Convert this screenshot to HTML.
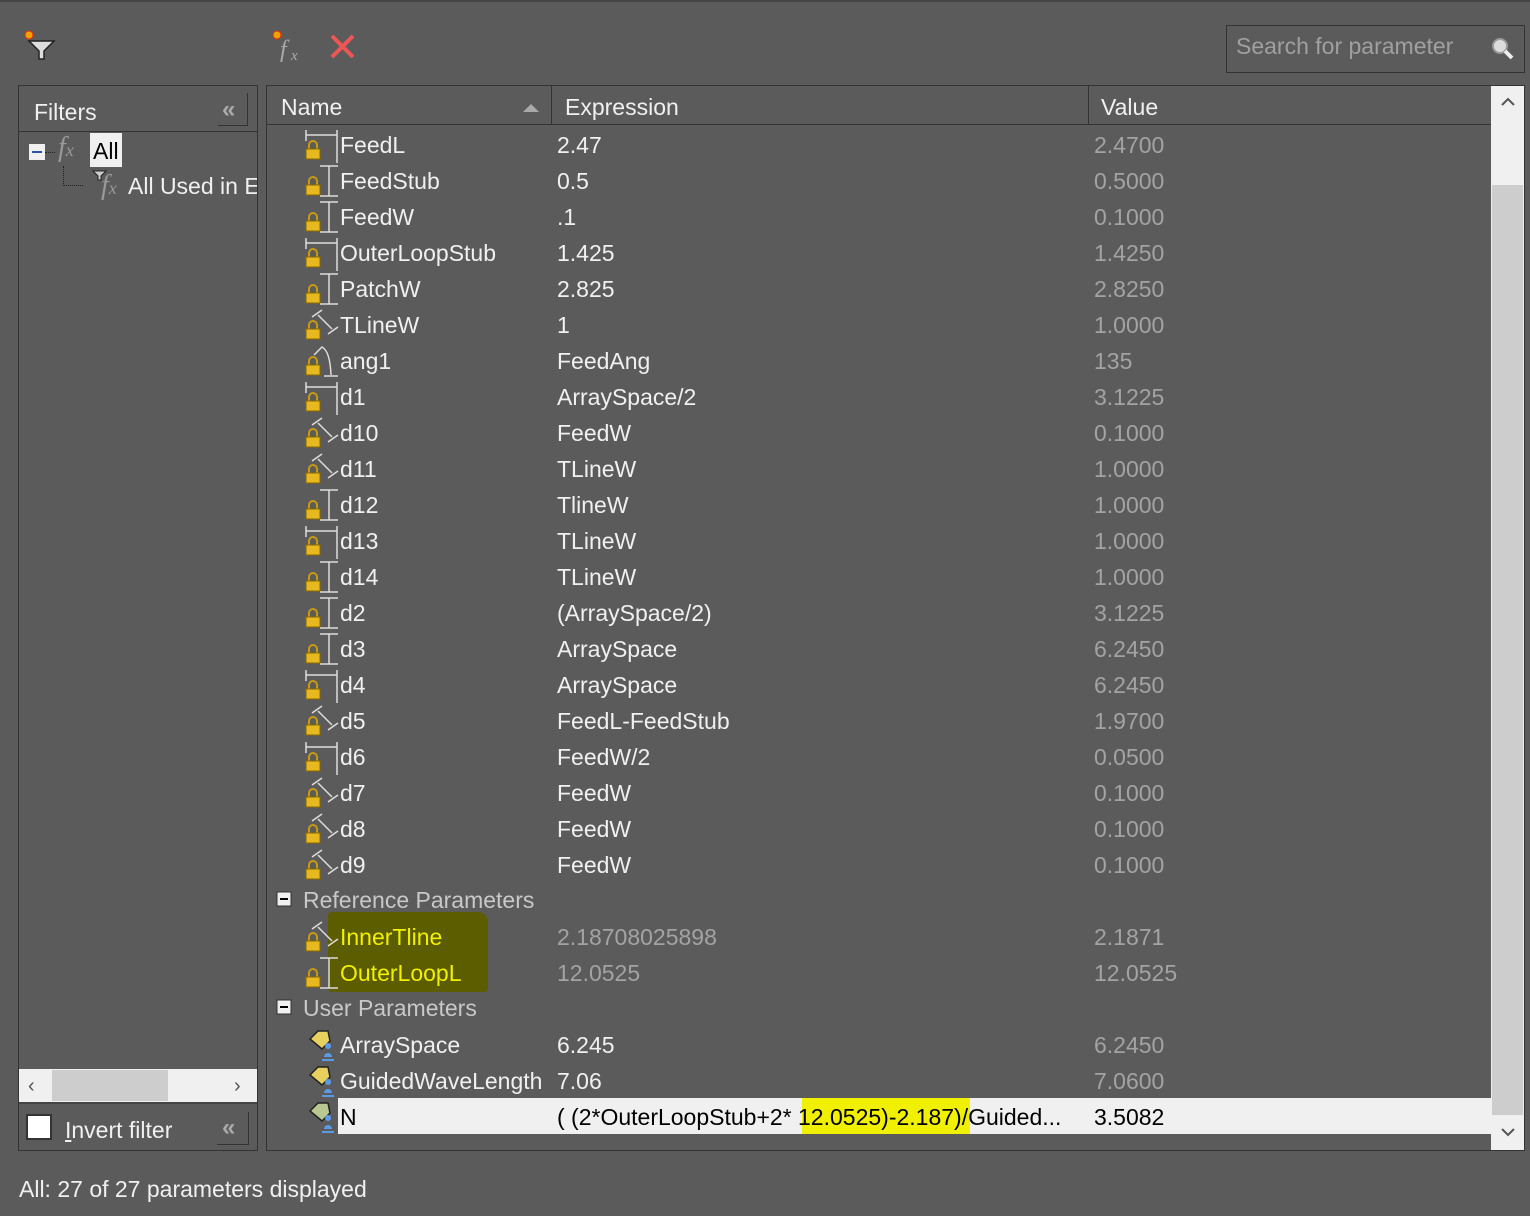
<!DOCTYPE html>
<html><head><meta charset="utf-8">
<style>
*{margin:0;padding:0;box-sizing:border-box}
body{width:1530px;height:1216px;background:#5b5b5b;font-family:"Liberation Sans",sans-serif;color:#f0f0f0;position:relative;overflow:hidden}
.a{position:absolute}
.t{position:absolute;font-size:23px;line-height:36px;white-space:nowrap}
.g{color:#a3a3a3}
</style></head><body>
<div class="a" style="left:0;top:0;width:1530px;height:2px;background:#444"></div>
<!-- toolbar icons -->
<svg class="a" style="left:24px;top:30px" width="36" height="32"><circle cx="5" cy="5" r="4" fill="#f5a000" stroke="#e03000"/><path d="M5 11 H30 L20 21 V29 H15 V21 Z" fill="#ddd" stroke="#222" stroke-width="1.5"/></svg>
<svg class="a" style="left:272px;top:30px" width="36" height="34"><circle cx="5" cy="5" r="4" fill="#f5a000" stroke="#e03000"/><text x="8" y="27" font-family="Liberation Serif" font-style="italic" font-size="24" fill="#aaa">f</text><text x="19" y="30" font-family="Liberation Serif" font-style="italic" font-size="15" fill="#aaa">x</text></svg>
<svg class="a" style="left:328px;top:32px" width="30" height="28"><path d="M4 4 L25 25 M25 4 L4 25" stroke="#e55" stroke-width="4"/></svg>
<!-- search -->
<div class="a" style="left:1226px;top:25px;width:299px;height:48px;border:1px solid #333"></div>
<div class="t" style="left:1236px;top:28px;color:#a0a0a0">Search for parameter</div>
<svg class="a" style="left:1490px;top:36px" width="26" height="26"><circle cx="10" cy="10" r="7" fill="#ddd" stroke="#999" stroke-width="2"/><path d="M15 15 L22 22" stroke="#eee" stroke-width="4"/></svg>
<!-- left panel -->
<div class="a" style="left:18px;top:85px;width:240px;height:1066px;border:1px solid #333"></div>
<div class="a" style="left:19px;top:131px;width:238px;height:1px;background:#333"></div>
<div class="t" style="left:34px;top:94px">Filters</div>
<div class="a" style="left:218px;top:93px;width:30px;height:33px;border-right:1px solid #333;border-bottom:1px solid #333"></div>
<div class="t" style="left:222px;top:92px;color:#aaa;font-weight:bold;font-size:24px">«</div>
<div class="a" style="left:29px;top:144px;width:16px;height:16px;background:#f0f0f0"></div>
<div class="a" style="left:32px;top:151px;width:10px;height:2px;background:#3050a0"></div>
<div class="a" style="left:45px;top:152px;width:10px;border-top:1px dotted #222"></div>
<div class="a" style="left:63px;top:166px;height:20px;border-left:1px dotted #222"></div>
<div class="a" style="left:63px;top:185px;width:20px;border-top:1px dotted #222"></div>
<div class="t" style="left:58px;top:130px;font-family:'Liberation Serif';font-style:italic;color:#999;font-size:28px">f<span style="font-size:18px">x</span></div>
<div class="a" style="left:90px;top:133px;width:32px;height:34px;background:#f0f0f0"></div>
<div class="t" style="left:93px;top:133px;color:#000">All</div>
<svg class="a" style="left:92px;top:170px" width="16" height="12"><path d="M1 1 H14 L9 6 V10 H6 V6 Z" fill="#ccc" stroke="#222"/></svg>
<div class="t" style="left:101px;top:168px;font-family:'Liberation Serif';font-style:italic;color:#999;font-size:28px">f<span style="font-size:18px">x</span></div>
<div class="a" style="left:128px;top:168px;width:129px;height:36px;overflow:hidden"><div class="t" style="left:0;top:0">All Used in Eq</div></div>
<!-- h scroll -->
<div class="a" style="left:19px;top:1069px;width:238px;height:33px;background:#f0f0f0"></div>
<div class="a" style="left:52px;top:1070px;width:116px;height:31px;background:#cdcdcd"></div>
<div class="t" style="left:28px;top:1068px;color:#555;font-size:20px">‹</div>
<div class="t" style="left:234px;top:1068px;color:#555;font-size:20px">›</div>
<div class="a" style="left:19px;top:1102px;width:238px;height:2px;background:#444"></div>
<div class="a" style="left:26px;top:1114px;width:26px;height:26px;background:#fff;border:2px solid #333"></div>
<div class="t" style="left:65px;top:1112px"><u>I</u>nvert filter</div>
<div class="a" style="left:217px;top:1112px;width:32px;height:33px;border-right:1px solid #333;border-bottom:1px solid #333"></div>
<div class="t" style="left:222px;top:1110px;color:#aaa;font-weight:bold;font-size:24px">«</div>
<!-- table panel -->
<div class="a" style="left:266px;top:85px;width:1259px;height:1066px;border:1px solid #333"></div>
<div class="a" style="left:267px;top:124px;width:1225px;height:1px;background:#333"></div>
<div class="a" style="left:551px;top:86px;width:1px;height:38px;background:#333"></div>
<div class="a" style="left:1088px;top:86px;width:1px;height:38px;background:#333"></div>
<div class="t" style="left:281px;top:89px">Name</div>
<svg class="a" style="left:522px;top:101px" width="18" height="12"><path d="M1 11 L9 3 L17 11 Z" fill="#aaa"/></svg>
<div class="t" style="left:565px;top:89px">Expression</div>
<div class="t" style="left:1101px;top:89px">Value</div>
<!-- v scroll -->
<div class="a" style="left:1491px;top:86px;width:33px;height:1064px;background:#f0f0f0"></div>
<div class="a" style="left:1492px;top:185px;width:31px;height:930px;background:#cdcdcd"></div>
<svg class="a" style="left:1500px;top:96px" width="16" height="12"><path d="M2 9 L8 3 L14 9" stroke="#555" stroke-width="2" fill="none"/></svg>
<svg class="a" style="left:1500px;top:1126px" width="16" height="12"><path d="M2 3 L8 9 L14 3" stroke="#555" stroke-width="2" fill="none"/></svg>
<!-- highlights -->
<div class="a" style="left:328px;top:912px;width:160px;height:80px;background:#5c5c00;border-radius:4px 10px 4px 4px"></div>
<div class="a" style="left:338px;top:1098px;width:1153px;height:36px;background:#f0f0f0"></div>
<div class="a" style="left:802px;top:1098px;width:168px;height:36px;background:#f0f000"></div>

<svg width="0" height="0" style="position:absolute">
<defs>
<g id="lk"><path d="M309 22 V18 a4 4 0 0 1 8 0 V22" fill="none" stroke="#c89a10" stroke-width="2"/><rect x="306" y="22" width="14" height="10" fill="#e8b820" stroke="#8a6a00"/></g>
<g id="H"><use href="#lk"/><path d="M306 3 V14 M306 8 H337 M337 3 V36" stroke="#ddd" stroke-width="1.5" fill="none"/></g>
<g id="V"><use href="#lk"/><path d="M320 3 H338 M329 3 V33 M320 33 H338" stroke="#ddd" stroke-width="1.5" fill="none"/></g>
<g id="A"><use href="#lk"/><path d="M312 10 L322 3 M318 8 L332 22 M328 27 L338 20" stroke="#ddd" stroke-width="1.5" fill="none"/></g>
<g id="G"><use href="#lk"/><path d="M314 12 L322 4 Q330 8 331 32 M324 33 H338" stroke="#ddd" stroke-width="1.5" fill="none"/></g>
<g id="U"><path d="M310 12 L318 4 L328 4 L330 14 L322 22 Z" fill="#e8d060" stroke="#222" stroke-width="1.5"/><path d="M324 30 a4 4 0 0 1 8 0 Z M322 32 H334 V34 H322 Z M328 22 a3 3 0 1 1 0.1 0" fill="#5a9ae8"/></g>
<g id="U2"><path d="M310 12 L318 4 L328 4 L330 14 L322 22 Z" fill="#b8c890" stroke="#222" stroke-width="1.5"/><path d="M324 30 a4 4 0 0 1 8 0 Z M322 32 H334 V34 H322 Z M328 22 a3 3 0 1 1 0.1 0" fill="#5a9ae8"/></g>
</defs></svg>

<svg class="a" style="left:0;top:0" width="1530" height="1216">
<use href="#H" y="127"/><use href="#V" y="163"/><use href="#V" y="199"/><use href="#H" y="235"/><use href="#V" y="271"/>
<use href="#A" y="307"/><use href="#G" y="343"/><use href="#H" y="379"/><use href="#A" y="415"/><use href="#A" y="451"/>
<use href="#V" y="487"/><use href="#H" y="523"/><use href="#V" y="559"/><use href="#V" y="595"/><use href="#V" y="631"/>
<use href="#H" y="667"/><use href="#A" y="703"/><use href="#H" y="739"/><use href="#A" y="775"/><use href="#A" y="811"/><use href="#A" y="847"/>
<use href="#A" y="919"/><use href="#V" y="955"/>
<use href="#U" y="1027"/><use href="#U" y="1063"/><use href="#U2" y="1099"/>
<rect x="277" y="892" width="14" height="14" fill="#f0f0f0" stroke="#333"/><rect x="280" y="898" width="8" height="2" fill="#000"/>
<rect x="277" y="1000" width="14" height="14" fill="#f0f0f0" stroke="#333"/><rect x="280" y="1006" width="8" height="2" fill="#000"/>
</svg>

<div class="t" style="left:340px;top:127px">FeedL</div><div class="t" style="left:557px;top:127px">2.47</div><div class="t g" style="left:1094px;top:127px">2.4700</div>
<div class="t" style="left:340px;top:163px">FeedStub</div><div class="t" style="left:557px;top:163px">0.5</div><div class="t g" style="left:1094px;top:163px">0.5000</div>
<div class="t" style="left:340px;top:199px">FeedW</div><div class="t" style="left:557px;top:199px">.1</div><div class="t g" style="left:1094px;top:199px">0.1000</div>
<div class="t" style="left:340px;top:235px">OuterLoopStub</div><div class="t" style="left:557px;top:235px">1.425</div><div class="t g" style="left:1094px;top:235px">1.4250</div>
<div class="t" style="left:340px;top:271px">PatchW</div><div class="t" style="left:557px;top:271px">2.825</div><div class="t g" style="left:1094px;top:271px">2.8250</div>
<div class="t" style="left:340px;top:307px">TLineW</div><div class="t" style="left:557px;top:307px">1</div><div class="t g" style="left:1094px;top:307px">1.0000</div>
<div class="t" style="left:340px;top:343px">ang1</div><div class="t" style="left:557px;top:343px">FeedAng</div><div class="t g" style="left:1094px;top:343px">135</div>
<div class="t" style="left:340px;top:379px">d1</div><div class="t" style="left:557px;top:379px">ArraySpace/2</div><div class="t g" style="left:1094px;top:379px">3.1225</div>
<div class="t" style="left:340px;top:415px">d10</div><div class="t" style="left:557px;top:415px">FeedW</div><div class="t g" style="left:1094px;top:415px">0.1000</div>
<div class="t" style="left:340px;top:451px">d11</div><div class="t" style="left:557px;top:451px">TLineW</div><div class="t g" style="left:1094px;top:451px">1.0000</div>
<div class="t" style="left:340px;top:487px">d12</div><div class="t" style="left:557px;top:487px">TlineW</div><div class="t g" style="left:1094px;top:487px">1.0000</div>
<div class="t" style="left:340px;top:523px">d13</div><div class="t" style="left:557px;top:523px">TLineW</div><div class="t g" style="left:1094px;top:523px">1.0000</div>
<div class="t" style="left:340px;top:559px">d14</div><div class="t" style="left:557px;top:559px">TLineW</div><div class="t g" style="left:1094px;top:559px">1.0000</div>
<div class="t" style="left:340px;top:595px">d2</div><div class="t" style="left:557px;top:595px">(ArraySpace/2)</div><div class="t g" style="left:1094px;top:595px">3.1225</div>
<div class="t" style="left:340px;top:631px">d3</div><div class="t" style="left:557px;top:631px">ArraySpace</div><div class="t g" style="left:1094px;top:631px">6.2450</div>
<div class="t" style="left:340px;top:667px">d4</div><div class="t" style="left:557px;top:667px">ArraySpace</div><div class="t g" style="left:1094px;top:667px">6.2450</div>
<div class="t" style="left:340px;top:703px">d5</div><div class="t" style="left:557px;top:703px">FeedL-FeedStub</div><div class="t g" style="left:1094px;top:703px">1.9700</div>
<div class="t" style="left:340px;top:739px">d6</div><div class="t" style="left:557px;top:739px">FeedW/2</div><div class="t g" style="left:1094px;top:739px">0.0500</div>
<div class="t" style="left:340px;top:775px">d7</div><div class="t" style="left:557px;top:775px">FeedW</div><div class="t g" style="left:1094px;top:775px">0.1000</div>
<div class="t" style="left:340px;top:811px">d8</div><div class="t" style="left:557px;top:811px">FeedW</div><div class="t g" style="left:1094px;top:811px">0.1000</div>
<div class="t" style="left:340px;top:847px">d9</div><div class="t" style="left:557px;top:847px">FeedW</div><div class="t g" style="left:1094px;top:847px">0.1000</div>
<div class="t g" style="left:303px;top:882px;color:#c8c8c8">Reference Parameters</div>
<div class="t" style="left:340px;top:919px;color:#f0f000">InnerTline</div><div class="t g" style="left:557px;top:919px">2.18708025898</div><div class="t g" style="left:1094px;top:919px">2.1871</div>
<div class="t" style="left:340px;top:955px;color:#f0f000">OuterLoopL</div><div class="t g" style="left:557px;top:955px">12.0525</div><div class="t g" style="left:1094px;top:955px">12.0525</div>
<div class="t g" style="left:303px;top:990px;color:#c8c8c8">User Parameters</div>
<div class="t" style="left:340px;top:1027px">ArraySpace</div><div class="t" style="left:557px;top:1027px">6.245</div><div class="t g" style="left:1094px;top:1027px">6.2450</div>
<div class="t" style="left:340px;top:1063px">GuidedWaveLength</div><div class="t" style="left:557px;top:1063px">7.06</div><div class="t g" style="left:1094px;top:1063px">7.0600</div>
<div class="t" style="left:340px;top:1099px;color:#000">N</div>
<div class="a" style="left:557px;top:1099px;width:520px;height:36px;overflow:hidden"><div class="t" style="left:0;top:0;color:#000">( (2*OuterLoopStub+2* 12.0525)-2.187)/Guided...</div></div>
<div class="t" style="left:1094px;top:1099px;color:#000">3.5082</div>

<div class="t" style="left:19px;top:1171px">All: 27 of 27 parameters displayed</div>
</body></html>
